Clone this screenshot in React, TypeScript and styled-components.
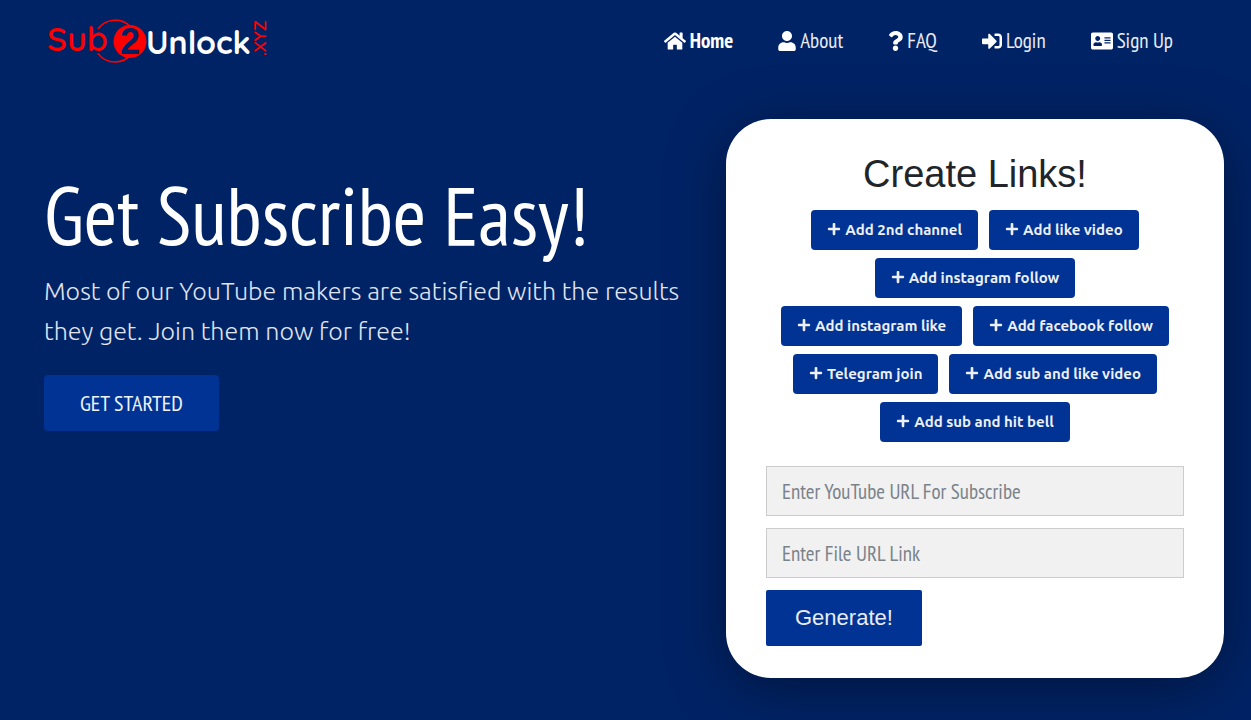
import React from "react";
import styled, { createGlobalStyle } from "styled-components";
import {
  FaAddressCard,
  FaHome,
  FaPlus,
  FaQuestion,
  FaSignInAlt,
  FaUser,
} from "react-icons/fa";

const condensed = `"Ubuntu Condensed", "PT Sans Narrow", "Liberation Sans Narrow", "Liberation Sans", sans-serif`;
const humanist = `Ubuntu, "Noto Sans", "Open Sans", sans-serif`;
const plain = `"Liberation Sans", Arial, sans-serif`;

const navy = "#002366";
const royal = "#003394";

const GlobalStyle = createGlobalStyle`
  *, *::before, *::after { box-sizing: border-box; }
  body {
    margin: 0;
    background: ${navy};
    color: #fff;
    font-family: ${condensed};
  }
`;

const Page = styled.div`
  min-height: 100vh;
  display: flex;
  flex-direction: column;
  overflow-x: clip;
`;

const Header = styled.header`
  display: flex;
  align-items: center;
  justify-content: space-between;
  height: 82px;
  padding: 0 78px 0 44px;
`;

const LogoLink = styled.a`
  display: block;
  line-height: 0;
`;

const Nav = styled.nav`
  display: flex;
  gap: 45px;
`;

const NavLink = styled.a<{ $active?: boolean; $iconWidth: number }>`
  display: flex;
  align-items: center;
  gap: 4px;
  color: ${(p) => (p.$active ? "#fff" : "#e8ecf4")};
  font-size: 21px;
  font-weight: ${(p) => (p.$active ? 700 : 400)};
  line-height: 32px;
  text-decoration: none;
  white-space: nowrap;

  svg {
    width: ${(p) => p.$iconWidth}px;
    height: 20px;
    color: #fff;
  }
`;

const Main = styled.main`
  display: grid;
  grid-template-columns: minmax(0, 4fr) minmax(0, 3fr);
  align-items: start;
  gap: 18px;
  padding: 37px 27px 42px 44px;
`;

const Hero = styled.section`
  padding-top: 50px;
`;

const Title = styled.h1`
  margin: 0;
  font-size: 81px;
  font-weight: 400;
  line-height: 92px;
`;

const Lead = styled.p`
  margin: 10px 0 24px;
  color: #e0e5ef;
  font-family: ${humanist};
  font-size: 25px;
  font-weight: 300;
  line-height: 40px;
`;

const StartButton = styled.button`
  height: 56px;
  padding: 0 36px;
  border: 0;
  border-radius: 4px;
  background: ${royal};
  color: #f0f3f8;
  font-family: ${condensed};
  font-size: 22px;
  text-transform: uppercase;
  cursor: pointer;
`;

const Card = styled.section`
  padding: 32px 40px;
  border-radius: 45px;
  background: #fff;
  box-shadow: 0 10px 60px rgba(0, 0, 0, 0.4);
  color: #212529;
`;

const CardTitle = styled.h2`
  margin: 0 0 13px;
  font-family: ${plain};
  font-size: 38px;
  font-weight: 400;
  line-height: 46px;
  text-align: center;
`;

const ActionRows = styled.div`
  display: flex;
  flex-direction: column;
  gap: 8px;
  margin-bottom: 24px;
`;

const ActionRow = styled.div`
  display: flex;
  justify-content: center;
  gap: 11px;
`;

const ActionButton = styled.button`
  display: flex;
  align-items: center;
  gap: 4px;
  height: 40px;
  padding: 0 16px 2px;
  border: 0;
  border-radius: 4px;
  background: ${royal};
  color: #edf0f6;
  font-family: ${humanist};
  font-size: 15px;
  font-weight: 700;
  white-space: nowrap;
  cursor: pointer;

  svg {
    font-size: 14px;
  }
`;

const Form = styled.form`
  display: flex;
  flex-direction: column;
  align-items: flex-start;
  gap: 12px;
`;

const Field = styled.input`
  width: 100%;
  height: 50px;
  padding: 0 15px;
  border: 1px solid #ccc;
  border-radius: 0;
  background: #f1f1f1;
  color: #212529;
  font-family: ${condensed};
  font-size: 21px;

  &::placeholder {
    color: #7b838a;
    opacity: 1;
  }
`;

const SubmitButton = styled.button`
  height: 56px;
  padding: 0 29px;
  border: 0;
  border-radius: 2px;
  background: ${royal};
  color: #e8ecf4;
  font-family: ${plain};
  font-size: 22px;
  cursor: pointer;
`;

const actionRows = [
  ["Add 2nd channel", "Add like video"],
  ["Add instagram follow"],
  ["Add instagram like", "Add facebook follow"],
  ["Telegram join", "Add sub and like video"],
  ["Add sub and hit bell"],
];

const navItems = [
  { label: "Home", icon: FaHome, iconWidth: 22, active: true },
  { label: "About", icon: FaUser, iconWidth: 18 },
  { label: "FAQ", icon: FaQuestion, iconWidth: 15 },
  { label: "Login", icon: FaSignInAlt, iconWidth: 20 },
  { label: "Sign Up", icon: FaAddressCard, iconWidth: 22 },
];

function Logo() {
  return (
    <svg width="226" height="50" viewBox="0 0 226 50" role="img" aria-label="Sub2Unlock.xyz">
      <g fill="none" stroke="#f00" strokeWidth="1.6">
        <path d="M54 13A21 21 0 0 1 86 10.300" />
        <path d="M54 37.400A21 21 0 0 0 88 37.300" />
      </g>
      <circle cx="86" cy="25.500" r="16.500" fill="#f00" />
      <g fontFamily="Quicksand, sans-serif">
        <text x="3" y="35" fill="#f00" fontSize="34" fontWeight="600">
          Sub
        </text>
        <text
          x="86"
          y="38"
          fill={navy}
          fontFamily="Liberation Sans, sans-serif"
          fontSize="36"
          fontWeight="700"
          textAnchor="middle"
        >
          2
        </text>
        <text x="102" y="38" fill="#fff" fontSize="32" fontWeight="700">
          Unlock
        </text>
        <text transform="translate(222 40) rotate(-90)" fill="#f00" fontSize="17" fontWeight="600">
          .XYZ
        </text>
      </g>
    </svg>
  );
}

export default function App() {
  return (
    <Page>
      <GlobalStyle />
      <Header>
        <LogoLink href="#home">
          <Logo />
        </LogoLink>
        <Nav aria-label="Main">
          {navItems.map(({ label, icon: Icon, iconWidth, active }) => (
            <NavLink
              key={label}
              href="#"
              $active={active}
              $iconWidth={iconWidth}
              aria-current={active ? "page" : undefined}
            >
              <Icon aria-hidden />
              {label}
            </NavLink>
          ))}
        </Nav>
      </Header>
      <Main>
        <Hero>
          <Title>Get Subscribe Easy!</Title>
          <Lead>
            Most of our YouTube makers are satisfied with the results they get. Join them now for free!
          </Lead>
          <StartButton type="button">Get started</StartButton>
        </Hero>
        <Card>
          <CardTitle>Create Links!</CardTitle>
          <ActionRows>
            {actionRows.map((row) => (
              <ActionRow key={row[0]}>
                {row.map((label) => (
                  <ActionButton key={label} type="button">
                    <FaPlus aria-hidden />
                    {label}
                  </ActionButton>
                ))}
              </ActionRow>
            ))}
          </ActionRows>
          <Form onSubmit={(e) => e.preventDefault()}>
            <Field type="url" aria-label="YouTube URL" placeholder="Enter YouTube URL For Subscribe" />
            <Field type="url" aria-label="File URL" placeholder="Enter File URL Link" />
            <SubmitButton type="submit">Generate!</SubmitButton>
          </Form>
        </Card>
      </Main>
    </Page>
  );
}
